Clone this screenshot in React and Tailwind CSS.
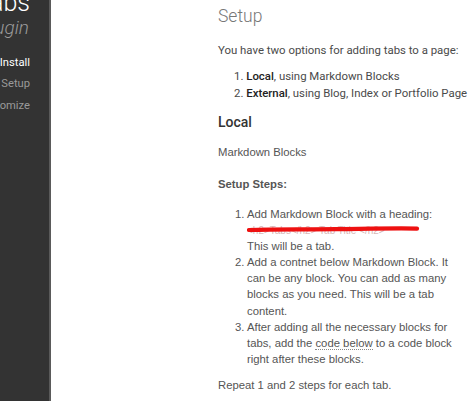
import React from "react";

export default function App() {
  const arial = { fontFamily: '"Liberation Sans", Arial, sans-serif' };
  return (
    <div className="flex w-[474px] h-[401px] overflow-hidden bg-white" style={{ fontFamily: 'Roboto, "Liberation Sans", sans-serif' }}>
      <div className="w-[51px] shrink-0 h-full bg-[#333333] border-r-2 border-[#5a5a5a] overflow-hidden flex flex-col items-end pr-[19px]">
        <div className="mt-[-11px] text-[25px] leading-[28px] font-light text-white whitespace-nowrap">Tabs</div>
        <div className="mt-[-1px] text-[19px] leading-[24px] font-light italic text-[#9a9a9a] whitespace-nowrap pr-[1px]">Plugin</div>
        <div className="mt-[12px] text-[11.2px] leading-[21px] text-white whitespace-nowrap">Install</div>
        <div className="text-[11.2px] leading-[22px] text-[#9a9a9a] whitespace-nowrap">Setup</div>
        <div className="text-[11.2px] leading-[21px] text-[#9a9a9a] whitespace-nowrap">Customize</div>
      </div>
      <div className="ml-[167px] w-[256px] shrink-0 text-[#4a4a4a]">
        <h1 className="mt-[4px] text-[17.5px] leading-[24px] font-light text-[#777]">Setup</h1>
        <p className="mt-[14px] text-[11.4px] leading-[17px] whitespace-nowrap">You have two options for adding tabs to a page:</p>
        <ol className="mt-[9px] pl-[16px] text-[11.4px] leading-[17px] whitespace-nowrap">
          <li>1. <b className="font-medium text-[#222]">Local</b>, using Markdown Blocks</li>
          <li>2. <b className="font-medium text-[#222]">External</b>, using Blog, Index or Portfolio Page</li>
        </ol>
        <h2 className="mt-[10px] text-[14px] leading-[20px] font-medium text-[#333]">Local</h2>
        <div style={arial} className="text-[11.3px] text-[#555]">
          <p className="mt-[12px] leading-[17px]">Markdown Blocks</p>
          <p className="mt-[15px] leading-[17px] font-bold">Setup Steps:</p>
          <ol className="mt-[13px] pl-[17px] leading-[16.1px] w-[242px]">
            <li className="flex">
              <span className="w-[12px] shrink-0">1.</span>
              <div>
                Add Markdown Block with a heading:
                <div className="relative h-[16.1px]">
                  <span className="text-[#d8b8b8] text-[10px] whitespace-nowrap">&lt;h2&gt;Tabs&lt;/h2&gt; Tab Title &lt;/h2&gt;</span>
                  <svg className="absolute left-[0px] top-[2px]" width="174" height="10" viewBox="0 0 174 10">
                    <path d="M2 6 C 30 4.8, 60 5.6, 90 5.2 S 150 4, 170 4.6" stroke="#ee1111" strokeWidth="4.2" fill="none" strokeLinecap="round" />
                  </svg>
                </div>
                This will be a tab.
              </div>
            </li>
            <li className="flex">
              <span className="w-[12px] shrink-0">2.</span>
              <div>Add a contnet below Markdown Block. It can be any block. You can add as many blocks as you need. This will be a tab content.</div>
            </li>
            <li className="flex">
              <span className="w-[12px] shrink-0">3.</span>
              <div>
                After adding all the necessary blocks for tabs, add the{" "}
                <span className="border-b border-dotted border-[#888]">code below</span> to a code block right after these blocks.
              </div>
            </li>
          </ol>
          <p className="mt-[10px] leading-[17px] whitespace-nowrap">Repeat 1 and 2 steps for each tab.</p>
        </div>
      </div>
    </div>
  );
}
